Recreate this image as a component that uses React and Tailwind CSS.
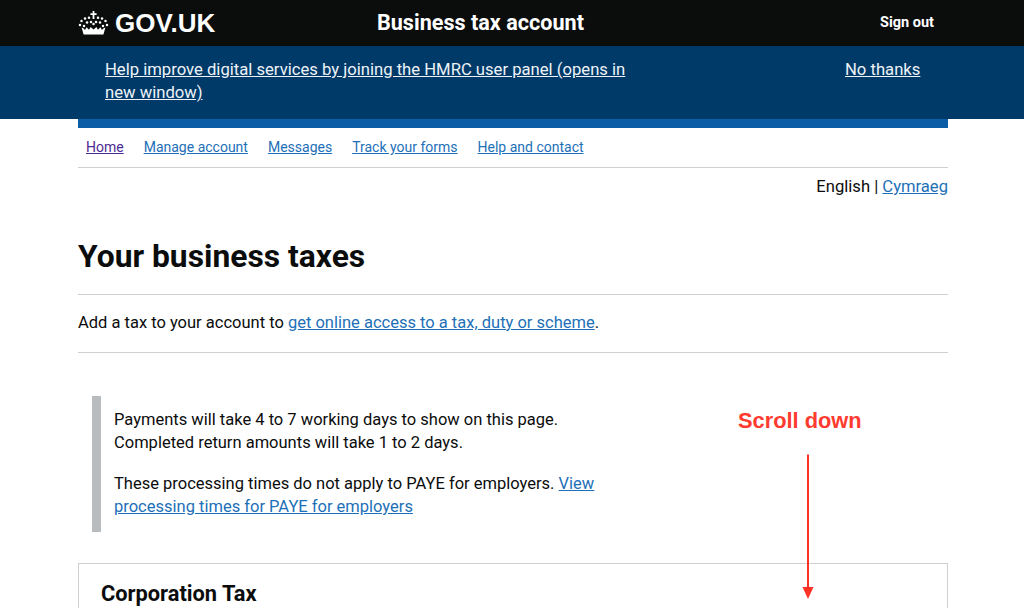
const font = { fontFamily: 'Roboto, sans-serif' }

const crownDots = [
  [2, 14], [3.5, 10], [7, 7.5], [11, 6.8], [20, 6.8], [24, 7.5], [27.5, 10], [29, 14],
  [6, 15], [9, 11.5], [13, 11], [18, 11], [22, 11.5], [25, 15], [15.5, 13],
]

function Crown() {
  return (
    <svg width="31" height="24" viewBox="0 0 31 24" fill="#fff" className="shrink-0">
      <path d="M14.6 0h1.8v2.2h2.2v1.8h-2.2v4h-1.8V4h-2.2V2.2h2.2z" />
      {crownDots.map(([cx, cy]) => (
        <circle key={`${cx}-${cy}`} cx={cx} cy={cy} r="1.25" />
      ))}
      <path d="M3.6 16.4c1.6.6 2.7 1.5 3.4 2.6l1.6-2.8 2.4 2.6 1.6-2.8 2.9 2.4 2.9-2.4 1.6 2.8 2.4-2.6 1.6 2.8c.7-1.1 1.8-2 3.4-2.6L25.400 23.500H5.600z" />
    </svg>
  )
}

const navLinks = ['Manage account', 'Messages', 'Track your forms', 'Help and contact']

export default function App() {
  return (
    <div className="h-[608px] overflow-hidden bg-white text-[#0b0c0c]" style={font}>
      <header className="h-[46px] bg-[#0b0c0c] text-white flex items-center pl-[78px] pr-[76px]">
        <div className="flex items-center gap-[6px] w-[299px]">
          <Crown />
          <span className="text-[26px] font-bold leading-none" style={{ fontFamily: '"Liberation Sans", sans-serif' }}>GOV.UK</span>
        </div>
        <span className="text-[21.6px] font-bold">Business tax account</span>
        <a className="ml-auto mr-[14px] text-[14.5px] font-bold">Sign out</a>
      </header>

      <div className="h-[73px] bg-[#003a69] text-[#eef3f7] flex pl-[105px] pt-[12px] text-[16.65px] leading-[23px]">
        <a className="underline w-[540px]">Help improve digital services by joining the HMRC user panel (opens in new window)</a>
        <a className="underline ml-[200px] whitespace-nowrap">No thanks</a>
      </div>

      <main className="ml-[78px] mr-[76px]">
        <div className="h-[9px] bg-[#0b5ea6]" />
        <nav className="h-[40px] border-b border-[#cfcfcf] flex items-center gap-[20px] pl-[8px] text-[14px] text-[#1d70b8]">
          <a className="underline text-[#4c2c92]">Home</a>
          {navLinks.map((label) => (
            <a key={label} className="underline">{label}</a>
          ))}
        </nav>
        <p className="text-right text-[16.6px] leading-[22px] mt-[8px]">
          English | <a className="underline text-[#1d70b8]">Cymraeg</a>
        </p>

        <h1 className="text-[31.8px] font-bold leading-[40px] mt-[38px]">Your business taxes</h1>

        <div className="mt-[18px] h-[59px] border-y border-[#cfcfcf] flex items-center text-[16.5px] pb-[1px]">
          <p>
            Add a tax to your account to{' '}
            <a className="underline text-[#1d70b8]">get online access to a tax, duty or scheme</a>.
          </p>
        </div>

        <div className="ml-[14px] mt-[43px] h-[136px] w-[510px] border-l-[9px] border-[#b9bcbe] pl-[13px] pt-[12px] text-[16.5px] leading-[23px]">
          <p>Payments will take 4 to 7 working days to show on this page. Completed return amounts will take 1 to 2 days.</p>
          <p className="mt-[18px]">
            These processing times do not apply to PAYE for employers.{' '}
            <a className="underline text-[#1d70b8]">View processing times for PAYE for employers</a>
          </p>
        </div>

        <section className="mt-[31px] h-[60px] border border-[#cfcfcf] px-[22px] pt-[16px]">
          <h2 className="text-[21.8px] font-bold leading-[28px]">Corporation Tax</h2>
        </section>
      </main>

      {/* annotation drawn over the page */}
      <div className="absolute left-[738px] top-[408px] text-[21.8px] leading-[26px] font-bold text-[#ff3b30]" style={{ fontFamily: '"Liberation Sans", sans-serif' }}>
        Scroll down
      </div>
      <svg className="absolute left-[800px] top-[452px]" width="16" height="148" viewBox="0 0 16 148">
        <path d="M8 2.500V136" stroke="#ff3024" strokeWidth="2" />
        <path d="M2.500 135h11L8 147z" fill="#ff3024" />
      </svg>
    </div>
  )
}
